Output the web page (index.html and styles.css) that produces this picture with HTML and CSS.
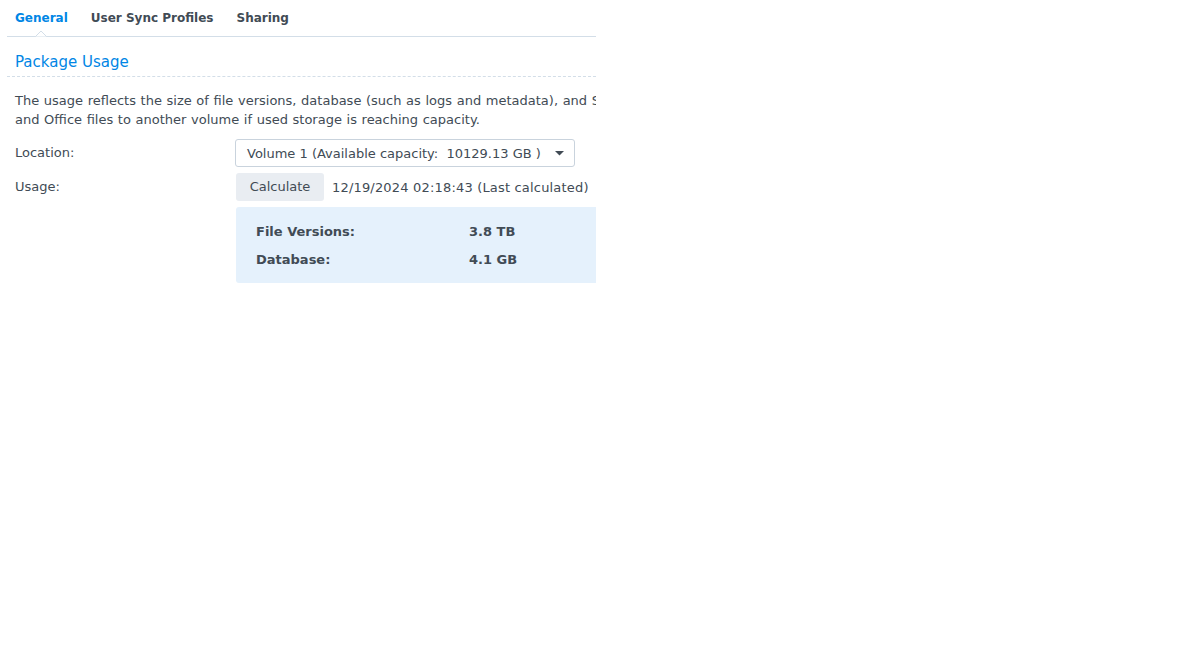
FILE: index.html
```html
<!DOCTYPE html>
<html>
<head>
<meta charset="utf-8">
<link rel="stylesheet" href="styles.css">
</head>
<body>
<div class="panel">
  <div class="tabs">
    <div class="tab active">General</div>
    <div class="tab">User Sync Profiles</div>
    <div class="tab">Sharing</div>
    <svg class="notch" width="14" height="7" viewBox="0 0 14 7"><path d="M0 6.5 H1.5 L7 1 L12.5 6.5 H14" fill="#fff" stroke="#d3dee8" stroke-width="1"/></svg>
  </div>
  <div class="section">
    <div class="section-title">Package Usage</div>
    <p class="desc">The usage reflects the size of file versions, database (such as logs and metadata), and Sync Profiles. You can move your Drive<br>and Office files to another volume if used storage is reaching capacity.</p>
    <div class="row">
      <div class="label">Location:</div>
      <div class="select">
        <span>Volume 1 (Available capacity:&nbsp; 10129.13 GB )</span>
        <svg class="caret" width="9" height="5" viewBox="0 0 9 5"><path d="M0 0 H9 L4.5 4.5 Z" fill="#414b55"/></svg>
      </div>
    </div>
    <div class="row">
      <div class="label">Usage:</div>
      <div class="btn">Calculate</div>
      <div class="stamp">12/19/2024 02:18:43 (Last calculated)</div>
    </div>
    <div class="row">
      <div class="label"></div>
      <div class="info">
        <div class="info-row"><span class="k">File Versions:</span><span class="v">3.8 TB</span></div>
        <div class="info-row"><span class="k">Database:</span><span class="v">4.1 GB</span></div>
      </div>
    </div>
  </div>
</div>
</body>
</html>
```
FILE: styles.css
```css
html, body {
  margin: 0;
  padding: 0;
  background: #fff;
}
body {
  font-family: "DejaVu Sans", sans-serif;
  font-size: 13px;
  color: #414b55;
}
.panel {
  width: 589px;
  margin-left: 7px;
  overflow: hidden;
}
.tabs {
  position: relative;
  display: flex;
  height: 37px;
  border-bottom: 1px solid #d3dee8;
  padding-left: 8px;
  gap: 23px;
  box-sizing: border-box;
}
.tab {
  font-size: 12px;
  font-weight: bold;
  line-height: 36px;
  color: #414b55;
  white-space: nowrap;
}
.tab.active {
  color: #0086e5;
}
.notch {
  position: absolute;
  left: 27px;
  bottom: -1px;
}
.section-title {
  font-size: 15px;
  color: #0086e5;
  line-height: 22px;
  padding: 14px 0 3px 8px;
  border-bottom: 1px dashed #d3dee8;
}
.section {
  padding: 0;
}
.desc {
  margin: 14px 0 10px 8px;
  line-height: 19px;
  white-space: nowrap;
  word-spacing: 0.5px;
}
.row {
  display: flex;
  align-items: center;
  margin-bottom: 6px;
  padding-left: 8px;
}
.label {
  width: 220px;
  flex: none;
  line-height: 28px;
}
.select {
  box-sizing: border-box;
  height: 28px;
  width: 340px;
  border: 1px solid #c9d3dd;
  border-radius: 3px;
  display: flex;
  align-items: center;
  justify-content: space-between;
  padding: 0 10px 0 11px;
  white-space: nowrap;
}
.caret {
  flex: none;
}
.btn {
  box-sizing: border-box;
  height: 28px;
  line-height: 28px;
  width: 88px;
  margin-left: 1px;
  background: #e9edf2;
  border-radius: 3px;
  text-align: center;
  flex: none;
}
.stamp {
  margin-left: 8px;
  white-space: nowrap;
  letter-spacing: 0.18px;
}
.info {
  margin-left: 1px;
  width: 380px;
  flex: none;
  box-sizing: border-box;
  background: #e5f1fc;
  border-radius: 3px;
  padding: 11px 20px 9px;
}
.info-row {
  display: flex;
  font-weight: bold;
  line-height: 28px;
}
.k {
  width: 213px;
}
```
